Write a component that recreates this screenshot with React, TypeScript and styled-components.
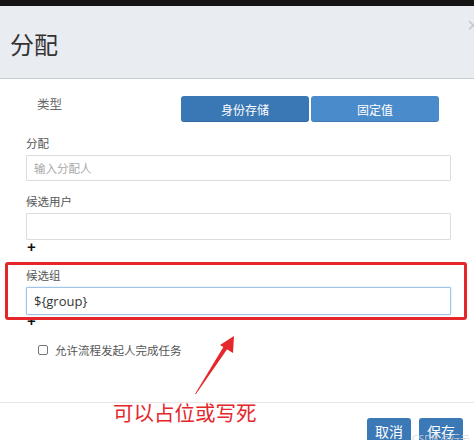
import styled, { createGlobalStyle } from 'styled-components';

const GlobalStyle = createGlobalStyle`
    html, body {
        margin: 0;
        padding: 0;
        background: #ffffff;
        overflow: hidden;
    }
    body {
        font-family: "Liberation Sans", "Noto Sans CJK SC", sans-serif;
        color: #333;
    }
`

const Modal = styled.div`
    position: relative;
    width: 474px;
    height: 440px;
    overflow: hidden;
    background: #fff;
`

const TopStrip = styled.div`
    height: 6px;
    background: #141414;
`

const Header = styled.div`
    height: 72px;
    display: flex;
    align-items: center;
    justify-content: space-between;
    padding-left: 10px;
    background: #e9ecf1;
    border-bottom: 1px solid #c9ccd1;
`

const Title = styled.h4`
    margin: 3px 0 0 0;
    font-size: 24px;
    font-weight: 400;
    color: #333;
    font-family: "Noto Sans CJK SC", sans-serif;
`

const Close = styled.span`
    align-self: flex-start;
    margin-top: 8px;
    margin-right: -5px;
    font-size: 20px;
    color: #c4c7cc;
`

const Body = styled.div`
    padding: 0 23px 0 26px;
`

const TypeRow = styled.div`
    display: flex;
    align-items: center;
    margin-top: 17px;
    height: 26px;
`

const TypeLabel = styled.div`
    width: 144px;
    padding-left: 11px;
    font-size: 12.5px;
    color: #666;
    font-family: "Noto Sans CJK SC", sans-serif;
    margin-top: -12px;
`

const SegGroup = styled.div`
    display: flex;
    gap: 2px;
    width: 258px;
`

const SegButton = styled.button<{ $active?: boolean }>`
    flex: 1;
    height: 26px;
    border: none;
    border-radius: 3px;
    background: ${p => p.$active ? '#3a77b5' : '#4a8bcc'};
    color: #fff;
    font-size: 12px;
    font-family: "Noto Sans CJK SC", sans-serif;
    box-shadow: inset 0 -1px 0 rgba(0, 0, 0, 0.12);
`

const Label = styled.div<{ $gap?: number }>`
    margin-top: ${p => p.$gap ?? 12}px;
    margin-bottom: 4px;
    font-size: 11.5px;
    line-height: 16px;
    color: #555;
    font-family: "Noto Sans CJK SC", sans-serif;
`

const Input = styled.input<{ $h?: number; $focus?: boolean }>`
    display: block;
    box-sizing: border-box;
    width: 100%;
    height: ${p => p.$h ?? 26}px;
    padding: 0 7px;
    border: 1px solid ${p => p.$focus ? '#9fc4e8' : '#dcdcdc'};
    border-radius: 1px;
    box-shadow: ${p => p.$focus ? '0 0 2px rgba(102, 175, 233, 0.45)' : 'none'};
    font-size: 13px;
    color: #333;
    font-family: "Open Sans", "Noto Sans CJK SC", sans-serif;
    outline: none;

    &::placeholder {
        color: #a8a8a8;
        font-size: 11.5px;
        font-family: "Noto Sans CJK SC", sans-serif;
    }
`

const Plus = styled.div<{ $gap?: number }>`
    position: relative;
    z-index: 0;
    margin-top: ${p => p.$gap ?? 2}px;
    margin-left: 1px;
    height: 10px;
    font-size: 15px;
    line-height: 10px;
    font-weight: 700;
    color: #111;
`

const Highlight = styled.div`
    position: relative;
    z-index: 1;
    margin: 10px -16px 0 -21px;
    padding: 0 13px 2px 18px;
    border: 3px solid #e5262b;
    border-radius: 3px;
`

const CheckRow = styled.label`
    display: flex;
    align-items: center;
    gap: 7px;
    margin-top: 16px;
    margin-left: 12px;
    font-size: 11.5px;
    color: #555;
    font-family: "Noto Sans CJK SC", sans-serif;
`

const CheckBox = styled.span`
    width: 8px;
    height: 8px;
    border: 1px solid #777;
    border-radius: 2px;
`

const Footer = styled.div`
    position: relative;
    margin-top: 44px;
    padding: 15px 11px 0 0;
    border-top: 1px solid #e7e7e7;
    display: flex;
    justify-content: flex-end;
    gap: 8px;
`

const FooterButton = styled.button`
    width: 44px;
    height: 32px;
    padding: 3px 0 0 0;
    border: none;
    border-radius: 3px;
    background: #3b78b6;
    color: #fff;
    font-size: 14px;
    line-height: 20px;
    font-family: "Noto Sans CJK SC", sans-serif;
    display: flex;
    justify-content: center;
    align-items: flex-start;
`

const Note = styled.div`
    position: absolute;
    left: 113px;
    top: -6px;
    font-size: 20.5px;
    color: #e5262b;
    font-family: "Noto Sans CJK SC", sans-serif;
`

const Watermark = styled.div`
    position: absolute;
    right: 4px;
    bottom: 4px;
    font-size: 10px;
    color: rgba(210, 214, 220, 0.85);
    font-family: "Noto Sans CJK SC", sans-serif;
`

const Pointer = styled.svg`
    position: absolute;
    left: 0;
    top: 0;
    pointer-events: none;
`

function App() {
    return (
        <Modal>
            <GlobalStyle />
            <TopStrip />
            <Header>
                <Title>分配</Title>
                <Close>×</Close>
            </Header>
            <Body>
                <TypeRow>
                    <TypeLabel>类型</TypeLabel>
                    <SegGroup>
                        <SegButton $active>身份存储</SegButton>
                        <SegButton>固定值</SegButton>
                    </SegGroup>
                </TypeRow>

                <Label $gap={13}>分配</Label>
                <Input placeholder="输入分配人" />

                <Label>候选用户</Label>
                <Input $h={27} />
                <Plus>+</Plus>

                <Highlight>
                    <Label $gap={2}>候选组</Label>
                    <Input $h={28} $focus defaultValue={"${group}"} />
                </Highlight>
                <Plus $gap={-4}>+</Plus>

                <CheckRow>
                    <CheckBox />
                    允许流程发起人完成任务
                </CheckRow>
            </Body>
            <Footer>
                <Note>可以占位或写死</Note>
                <FooterButton>取消</FooterButton>
                <FooterButton>保存</FooterButton>
                <Watermark>CSDN @行云</Watermark>
            </Footer>

            {/* arrow from the note up to the group field */}
            <Pointer width="474" height="440" viewBox="0 0 474 440">
                <polygon points="195,394 196,394 228,348 224,346" fill="#e5262b" />
                <polygon points="234,336 220,345 233,353" fill="#e5262b" />
            </Pointer>
        </Modal>
    );
}

export default App;
